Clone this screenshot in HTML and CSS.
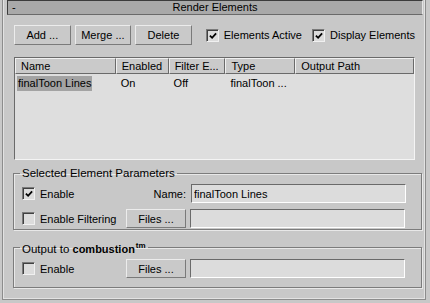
FILE: index.html
```html
<!DOCTYPE html>
<html lang="en">
<head>
  <meta charset="UTF-8" />
  <title>Render Elements</title>
  <link rel="stylesheet" href="styles.css">
</head>
<body>

  <div class="rollout">
    <div class="rollout-head">
      <span class="toggle">-</span>
      <span class="title">Render Elements</span>
    </div>

    <div class="rollout-body">
      <!-- Top buttons and toggles -->
      <div class="toolbar">
        <button class="btn">Add ...</button>
        <button class="btn">Merge ...</button>
        <button class="btn">Delete</button>
        <label class="check first-check">
          <span class="box"><svg viewBox="0 0 9 9"><polyline points="1,4 3.5,6.5 8,1.5" /></svg></span>
          Elements Active
        </label>
        <label class="check second-check">
          <span class="box"><svg viewBox="0 0 9 9"><polyline points="1,4 3.5,6.5 8,1.5" /></svg></span>
          Display Elements
        </label>
      </div>

      <!-- Element list -->
      <div class="list">
        <div class="list-head">
          <div class="col c-name">Name</div>
          <div class="col c-enabled">Enabled</div>
          <div class="col c-filter">Filter E...</div>
          <div class="col c-type">Type</div>
          <div class="col c-path">Output Path</div>
        </div>
        <div class="list-row">
          <div class="col c-name"><span class="selected">finalToon Lines</span></div>
          <div class="col c-enabled">On</div>
          <div class="col c-filter">Off</div>
          <div class="col c-type">finalToon ...</div>
          <div class="col c-path"></div>
        </div>
      </div>

      <fieldset class="group group-params">
        <legend>Selected Element Parameters</legend>
        <div class="row">
          <label class="check row-check">
            <span class="box"><svg viewBox="0 0 9 9"><polyline points="1,4 3.5,6.5 8,1.5" /></svg></span>
            Enable
          </label>
          <span class="name-label">Name:</span>
          <input class="field" type="text" value="finalToon Lines" />
        </div>
        <div class="row">
          <label class="check row-check">
            <span class="box empty"></span>
            Enable Filtering
          </label>
          <button class="btn files-btn">Files ...</button>
          <input class="field" type="text" value="" />
        </div>
      </fieldset>

      <fieldset class="group group-output">
        <legend>Output to <b>combustion</b><sup>tm</sup></legend>
        <div class="row">
          <label class="check row-check">
            <span class="box empty"></span>
            Enable
          </label>
          <button class="btn files-btn">Files ...</button>
          <input class="field" type="text" value="" />
        </div>
      </fieldset>
    </div>
  </div>

</body>
</html>
```

FILE: styles.css
```css
body {
  margin: 0;
  background: #c8c8c8;
  font-family: "Liberation Sans", Arial, sans-serif;
  font-size: 11px;
  color: #000;
}
.rollout {
  margin-left: 2px;
  width: 422px;
  height: 299px;
  border-left: 1px solid #8c8c8c;
  border-right: 1px solid #8c8c8c;
  border-bottom: 1px solid #8c8c8c;
  box-shadow: inset 1px 0 #e2e2e2, inset -1px -1px #e2e2e2;
}
.rollout-head {
  position: relative;
  margin: 0 2px 0 4px;
  height: 13px;
  background: #a9a9a9;
  border-top: 1px solid #3c3c3c;
  border-left: 1px solid #3c3c3c;
  border-right: 1px solid #e4e4e4;
  border-bottom: 1px solid #6a6a6a;
  text-align: center;
  line-height: 13px;
}
.toggle {
  position: absolute;
  left: 4px;
  top: 0;
}
.rollout-body {
  padding: 10px 10px 0 11px;
}

/* Buttons and checkboxes */
.toolbar {
  display: flex;
  align-items: center;
  height: 20px;
}
.btn {
  font-family: inherit;
  font-size: 11px;
  color: #000;
  background: #c9c9c9;
  border: 1px solid;
  border-color: #ececec #7a7a7a #7a7a7a #ececec;
  width: 59px;
  height: 20px;
  padding: 0;
  margin-right: 4px;
}
.toolbar .btn:nth-child(3) {
  margin-right: 14px;
}
.check {
  display: flex;
  align-items: center;
  gap: 5px;
  white-space: nowrap;
}
.second-check {
  margin-left: 10px;
}
.box {
  width: 11px;
  height: 11px;
  background: #dcdcdc;
  border: 1px solid;
  border-color: #7a7a7a #f0f0f0 #f0f0f0 #7a7a7a;
  box-shadow: inset 1px 1px #404040;
  display: flex;
  align-items: center;
  justify-content: center;
}
.box svg {
  width: 8px;
  height: 8px;
  margin: 1px 0 0 1px;
}
.box polyline {
  fill: none;
  stroke: #000;
  stroke-width: 2;
}

/* List */
.list {
  margin-top: 12px;
  height: 101px;
  width: 399px;
  background: #dedede;
  border: 1px solid;
  border-color: #6a6a6a #f4f4f4 #f4f4f4 #6a6a6a;
}
.list-head {
  display: flex;
  height: 16px;
}
.list-head .col {
  background: #cacaca;
  border: 1px solid;
  border-color: #f0f0f0 #6a6a6a #6a6a6a #f0f0f0;
  padding-left: 5px;
  line-height: 14px;
  box-sizing: border-box;
}
.list-row {
  display: flex;
  height: 15px;
  line-height: 15px;
  margin-top: 2px;
}
.list-row .col {
  padding-left: 5px;
  box-sizing: border-box;
}
.list-row .c-name {
  padding-left: 2px;
}
.c-name { width: 101px; }
.c-enabled { width: 53px; }
.c-filter { width: 57px; }
.c-type { width: 70px; }
.c-path { width: 119px; }
.selected {
  background: #a3a3a3;
  padding: 1px 1px 2px 1px;
}

/* Groups */
.group {
  margin: 7px 0 0 -1px;
  width: 399px;
  padding: 4px 0 1px 8px;
  border: 1px solid #7c7c7c;
  box-shadow: inset 1px 1px #e8e8e8, 1px 1px #e8e8e8;
}
.group legend {
  padding: 0 2px;
  margin-left: -2px;
  line-height: 13px;
  font-size: 11.5px;
}
.group legend b {
  font-size: 11px;
}
.group legend sup {
  font-size: 8px;
  font-weight: bold;
  vertical-align: 5px;
  margin-left: 1px;
}
.group-output {
  margin-top: 9px;
  padding: 3px 0 9px 8px;
}
.row {
  display: flex;
  align-items: center;
  height: 19px;
}
.row + .row {
  margin-top: 6px;
}
.row-check {
  width: 104px;
}
.name-label {
  width: 65px;
  text-align: right;
  padding-right: 5px;
  box-sizing: border-box;
}
.files-btn {
  width: 60px;
  height: 19px;
  margin-right: 4px;
}
.field {
  width: 215px;
  height: 19px;
  box-sizing: border-box;
  background: #dcdcdc;
  border: 1px solid;
  border-color: #6a6a6a #ffffff #ffffff #6a6a6a;
  font-family: inherit;
  font-size: 11px;
  padding: 0 2px;
  margin: 0;
  color: #000;
}
```
